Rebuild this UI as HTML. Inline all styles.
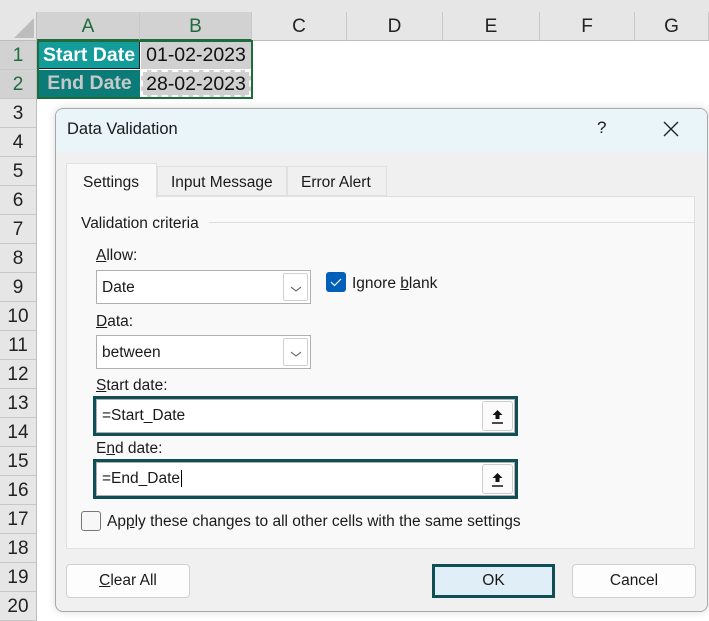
<!DOCTYPE html><html><head><style>
*{margin:0;padding:0;box-sizing:border-box}
body{width:709px;height:613px;overflow:hidden;background:#fff;font-family:"Liberation Sans",sans-serif;position:relative}
.a{position:absolute}
.ch{position:absolute;top:12px;height:29px;background:#e6e6e6;border-right:1px solid #c8c8c8;border-bottom:1px solid #bdbdbd;font-size:19px;color:#222;text-align:center;line-height:29px}
.rh{position:absolute;left:0;width:37px;height:29px;background:#e6e6e6;border-bottom:1px solid #c8c8c8;border-right:1px solid #bdbdbd;font-size:19px;color:#222;text-align:center;line-height:29px}
.t{font-size:15.5px;color:#1a1a1a;position:absolute;white-space:nowrap}
.box{position:absolute;background:#fff;border:1px solid #b0b0b0}
.dd{position:absolute;right:2px;top:2px;bottom:2px;width:25px;border:1px solid #d0d0d0;border-radius:2px;background:#fff}
.up{position:absolute;right:1px;top:1px;bottom:1px;width:31px;border:1px solid #ccc;border-radius:3px;background:#fbfbfb}
.btn{position:absolute;top:564px;height:34px;border:1px solid #d0d0d0;border-radius:4px;background:#fdfdfd;font-size:15.5px;text-align:center;line-height:32px;color:#1a1a1a}
</style></head><body>
<div class="a" style="left:0;top:0;width:709px;height:12px;background:#e6e6e6"></div>
<div class="a" style="left:0;top:12px;width:37px;height:29px;background:#e6e6e6;border-right:1px solid #bdbdbd;border-bottom:1px solid #bdbdbd"></div>
<div class="a" style="left:14px;top:18px;width:0;height:0;border-left:20px solid transparent;border-bottom:20px solid #bdbdbd"></div>
<div class="ch" style="left:37px;width:103px;background:#d2d2d2;color:#1e6b3c;border-bottom:2px solid #1e6b3c">A</div>
<div class="ch" style="left:140px;width:112px;background:#d2d2d2;color:#1e6b3c;border-bottom:2px solid #1e6b3c">B</div>
<div class="ch" style="left:252px;width:95px">C</div>
<div class="ch" style="left:347px;width:96px">D</div>
<div class="ch" style="left:443px;width:97px">E</div>
<div class="ch" style="left:540px;width:95px">F</div>
<div class="ch" style="left:635px;width:74px">G</div>
<div class="rh" style="top:41px;background:#d2d2d2;color:#1e6b3c">1</div>
<div class="rh" style="top:70px;background:#d2d2d2;color:#1e6b3c">2</div>
<div class="rh" style="top:99px">3</div><div class="rh" style="top:128px">4</div><div class="rh" style="top:157px">5</div><div class="rh" style="top:186px">6</div><div class="rh" style="top:215px">7</div><div class="rh" style="top:244px">8</div><div class="rh" style="top:273px">9</div><div class="rh" style="top:302px">10</div><div class="rh" style="top:331px">11</div><div class="rh" style="top:360px">12</div><div class="rh" style="top:389px">13</div><div class="rh" style="top:418px">14</div><div class="rh" style="top:447px">15</div><div class="rh" style="top:476px">16</div><div class="rh" style="top:505px">17</div><div class="rh" style="top:534px">18</div><div class="rh" style="top:563px">19</div><div class="rh" style="top:592px">20</div>
<div class="a" style="left:37px;top:40px;width:216px;height:59px;border:2px solid #1e6b3c"></div>
<div class="a" style="left:39px;top:42px;width:101px;height:27px;background:#139c9a;color:#fff;font-weight:bold;font-size:19.5px;line-height:27px;text-align:center;border-right:1px solid #222;border-bottom:1px solid #222">Start Date</div>
<div class="a" style="left:39px;top:70px;width:101px;height:27px;background:#0b7b78;color:#c8c8c8;font-weight:bold;font-size:19.5px;line-height:27px;text-align:center">End Date</div>
<div class="a" style="left:141px;top:42px;width:110px;height:27px;background:#d0d0d0;font-size:19.5px;line-height:27px;text-align:center;color:#111">01-02-2023</div>
<div class="a" style="left:141px;top:70px;width:110px;height:27px;background:#d0d0d0;font-size:19.5px;line-height:25px;text-align:center;color:#111;border:2px dashed #fff">28-02-2023</div>
<!-- dialog -->
<div class="a" style="left:55px;top:108px;width:653px;height:504px;background:#f0f0f0;border:1px solid #a8a8a8;border-radius:8px;box-shadow:0 0 8px rgba(0,0,0,.15)"></div>
<div class="a" style="left:56px;top:109px;width:651px;height:43px;background:#e9f5f8;border-radius:7px 7px 0 0"></div>
<div class="t" style="left:67px;top:120px;font-size:16.5px">Data Validation</div>
<div class="t" style="left:597px;top:118px;font-size:17px">?</div>
<svg class="a" style="left:663px;top:121px" width="16" height="16"><path d="M1 1L15 15M15 1L1 15" stroke="#222" stroke-width="1.4"/></svg>
<div class="a" style="left:66px;top:196px;width:629px;height:353px;background:#f9f9f9;border:1px solid #e0e0e0"></div>
<div class="a" style="left:66px;top:163px;width:91px;height:35px;background:#f9f9f9;border:1px solid #e0e0e0;border-bottom:none"></div>
<div class="t" style="left:83px;top:174px">Settings</div>
<div class="a" style="left:157px;top:166px;width:130px;height:30px;background:#f0f0f0;border:1px solid #e0e0e0"></div>
<div class="t" style="left:171px;top:174px">Input Message</div>
<div class="a" style="left:287px;top:166px;width:100px;height:30px;background:#f0f0f0;border:1px solid #e0e0e0"></div>
<div class="t" style="left:301px;top:174px">Error Alert</div>
<div class="t" style="left:81px;top:215px">Validation criteria</div>
<div class="a" style="left:209px;top:222px;width:486px;height:1px;background:#ddd"></div>
<div class="t" style="left:96px;top:247px"><u>A</u>llow:</div>
<div class="box" style="left:96px;top:270px;width:215px;height:34px"><span class="t" style="left:5px;top:8px">Date</span><div class="dd"><svg width="24" height="28"><path d="M7 13l5 4 5-4" fill="none" stroke="#555"/></svg></div></div>
<div class="a" style="left:326px;top:272px;width:20px;height:20px;background:#005fb8;border-radius:3px"><svg width="20" height="20"><path d="M5 10l3.5 3.5L15 7" fill="none" stroke="#fff" stroke-width="1.2"/></svg></div>
<div class="t" style="left:352px;top:275px">Ignore <u>b</u>lank</div>
<div class="t" style="left:96px;top:313px"><u>D</u>ata:</div>
<div class="box" style="left:96px;top:335px;width:215px;height:34px"><span class="t" style="left:5px;top:8px">between</span><div class="dd"><svg width="24" height="28"><path d="M7 13l5 4 5-4" fill="none" stroke="#555"/></svg></div></div>
<div class="t" style="left:96px;top:377px"><u>S</u>tart date:</div>
<div class="a" style="left:93px;top:396px;width:425px;height:40px;border:3px solid #0d4f55"></div>
<div class="box" style="left:96px;top:399px;width:419px;height:34px"><span class="t" style="left:5px;top:7px">=Start_Date</span><div class="up"><svg width="29" height="30"><path d="M14.5 8l-5 5h3v4h4v-4h3z" fill="#111"/><path d="M9 21h11" stroke="#111" stroke-width="1.5"/></svg></div></div>
<div class="t" style="left:96px;top:440px">E<u>n</u>d date:</div>
<div class="a" style="left:93px;top:459px;width:425px;height:40px;border:3px solid #0d4f55"></div>
<div class="box" style="left:96px;top:462px;width:419px;height:34px"><span class="t" style="left:5px;top:7px">=End_Date<span style="border-left:1px solid #000;margin-left:1px"></span></span><div class="up"><svg width="29" height="30"><path d="M14.5 8l-5 5h3v4h4v-4h3z" fill="#111"/><path d="M9 21h11" stroke="#111" stroke-width="1.5"/></svg></div></div>
<div class="a" style="left:81px;top:511px;width:20px;height:20px;border:1px solid #777;border-radius:3px;background:#f7f7f7"></div>
<div class="t" style="left:107px;top:513px">Ap<u>p</u>ly these changes to all other cells with the same settings</div>
<div class="btn" style="left:66px;width:124px"><u>C</u>lear All</div>
<div class="btn" style="left:432px;width:123px;background:#e0eef8;border:3px solid #0d4f55;border-radius:0;line-height:28px">OK</div>
<div class="btn" style="left:572px;width:124px">Cancel</div>
</body></html>
